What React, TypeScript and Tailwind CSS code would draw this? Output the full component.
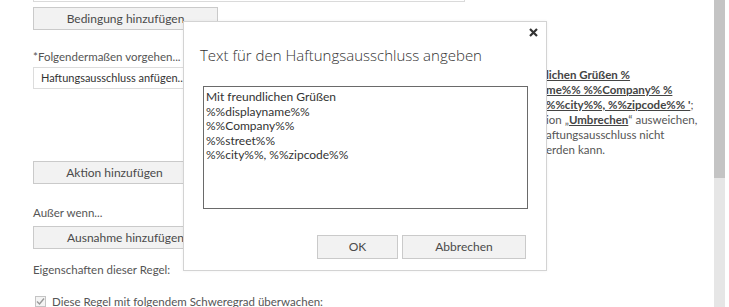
import React from "react";

const font = { fontFamily: 'Lato, "Open Sans", Arial, sans-serif' };
const titleFont = { fontFamily: '"Open Sans", "Noto Sans", Arial, sans-serif' };

function GrayButton({ label, className }: { label: string; className: string }) {
    return (
        <div
            className={`flex shrink-0 items-center justify-center border border-[#cacaca] bg-[#f2f2f2] text-[12px] text-[#4a4a4a] ${className}`}
        >
            {label}
        </div>
    );
}

// right-hand summary; the left part of each line sits behind the dialog
const summary: { hidden: string; parts: { t: string; b?: boolean }[] }[] = [
    { hidden: "'Mit freund", parts: [{ t: "lichen Grüßen %", b: true }] },
    { hidden: "%%display", parts: [{ t: "me%% %%Company% %", b: true }] },
    { hidden: "%%street%%", parts: [{ t: " %%city%%, %%zipcode%% '", b: true }, { t: ";" }] },
    { hidden: "Auf Akt", parts: [{ t: "ion „" }, { t: "Umbrechen", b: true }, { t: "“ ausweichen," }] },
    { hidden: "wenn der H", parts: [{ t: "aftungsausschluss nicht" }] },
    { hidden: "angewendet w", parts: [{ t: "erden kann." }] },
];

export default function App() {
    return (
        <div className="relative flex h-[307px] w-[729px] overflow-hidden bg-white" style={font}>
            {/* Main form */}
            <div className="flex flex-1">
                {/* Left column */}
                <div className="flex w-[450px] flex-col pl-[33px]">
                    <div className="h-[2px] w-[432px] shrink-0 border-x border-b border-[#dadada]" />
                    <GrayButton label="Bedingung hinzufügen" className="mt-[5px] h-[23px] w-[185px]" />
                    <div className="mt-[20px] shrink-0 text-[11.5px] leading-[14px] text-[#555]">*Folgendermaßen vorgehen...</div>
                    <div className="mt-[3px] flex h-[22px] w-[185px] shrink-0 items-center whitespace-nowrap border border-[#dcdcdc] pl-[7px] text-[11px] text-[#333]">
                        Haftungsausschluss anfügen...
                    </div>
                    <GrayButton label="Aktion hinzufügen" className="mt-[72px] h-[23px] w-[163px]" />
                    <div className="mt-[22px] shrink-0 text-[11.5px] leading-[14px] text-[#555]">Außer wenn...</div>
                    <GrayButton label="Ausnahme hinzufügen" className="mt-[6px] h-[23px] w-[185px]" />
                    <div className="mt-[14px] shrink-0 text-[11.5px] leading-[14px] text-[#555]">Eigenschaften dieser Regel:</div>
                    <div className="mt-[16px] flex shrink-0 items-center gap-[6px] pl-[2px]">
                        <div className="flex h-[11px] w-[11px] items-center justify-center border border-[#c4c4c4] bg-[#f4f4f4]">
                            <svg width="9" height="9" viewBox="0 0 9 9">
                                <path d="M1 4.5 L3.5 7 L8 1.5" fill="none" stroke="#9a9a9a" strokeWidth="1.4" />
                            </svg>
                        </div>
                        <span className="text-[11.5px] text-[#555]">Diese Regel mit folgendem Schweregrad überwachen:</span>
                    </div>
                </div>

                {/* Right column summary */}
                <div className="flex flex-col pt-[67px] text-[11.5px] leading-[15px] text-[#555]">
                    {summary.map((line, i) => (
                        <div key={i} className="flex whitespace-nowrap">
                            <span className="w-[96px] overflow-hidden text-right">{line.hidden}</span>
                            <span>
                                {line.parts.map((p, j) =>
                                    p.b ? (
                                        <span key={j} className="font-bold text-[#444] underline">
                                            {p.t}
                                        </span>
                                    ) : (
                                        <span key={j}>{p.t}</span>
                                    )
                                )}
                            </span>
                        </div>
                    ))}
                </div>
            </div>

            {/* Scrollbar */}
            <div className="mr-[4px] flex w-[11px] flex-col bg-[#e6e6e6]">
                <div className="h-[178px] bg-[#c4c4c4]" />
            </div>

            {/* Dialog */}
            <div className="absolute left-[183px] top-[21px] flex h-[250px] w-[364px] flex-col border border-[#d3d3d3] bg-white shadow-[0_0_3px_rgba(0,0,0,0.06)]">
                <div className="flex justify-end pr-[8px] pt-[6px]">
                    <svg width="9" height="9" viewBox="0 0 9 9">
                        <path d="M1 1 L8 8 M8 1 L1 8" stroke="#333" strokeWidth="2.2" />
                    </svg>
                </div>
                <div className="mt-[8px] pl-[16px] text-[15px] font-light leading-[20px] text-[#333]" style={titleFont}>
                    Text für den Haftungsausschluss angeben
                </div>
                <div className="ml-[19px] mt-[21px] h-[123px] w-[325px] border border-[#6a6a6a] px-[2px] pt-[3px] text-[12px] leading-[14.6px] text-[#333]">
                    <div>Mit freundlichen Grüßen</div>
                    <div>%%displayname%%</div>
                    <div>%%Company%%</div>
                    <div>%%street%%</div>
                    <div>%%city%%, %%zipcode%%</div>
                </div>
                <div className="mr-[20px] mt-[26px] flex justify-end gap-[4px]">
                    <GrayButton label="OK" className="h-[24px] w-[81px]" />
                    <GrayButton label="Abbrechen" className="h-[24px] w-[124px]" />
                </div>
            </div>
        </div>
    );
}
